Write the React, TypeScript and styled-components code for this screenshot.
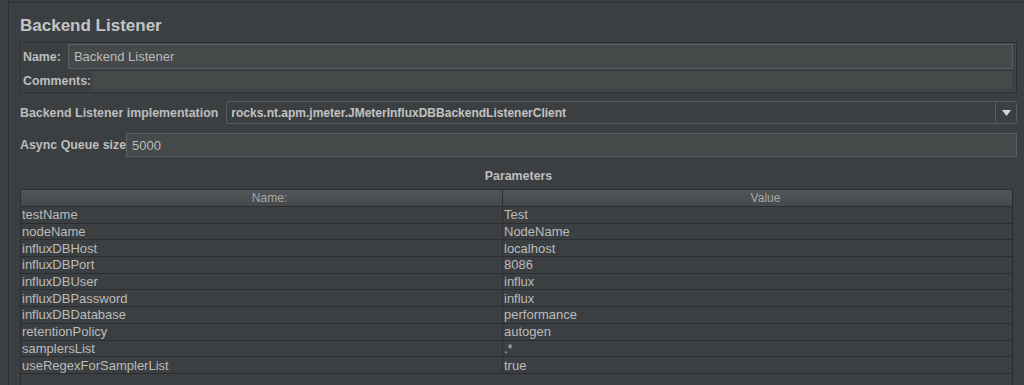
import React from 'react';
import styled, {createGlobalStyle} from 'styled-components';

type Param = {
    name: string
    value: string
}

const params: Param[] = [
    {name: 'testName', value: 'Test'},
    {name: 'nodeName', value: 'NodeName'},
    {name: 'influxDBHost', value: 'localhost'},
    {name: 'influxDBPort', value: '8086'},
    {name: 'influxDBUser', value: 'influx'},
    {name: 'influxDBPassword', value: 'influx'},
    {name: 'influxDBDatabase', value: 'performance'},
    {name: 'retentionPolicy', value: 'autogen'},
    {name: 'samplersList', value: '.*'},
    {name: 'useRegexForSamplerList', value: 'true'},
];

const GlobalStyle = createGlobalStyle`
    html, body {
        margin: 0;
        padding: 0;
        background: #3c3f41;
        overflow: hidden;
    }
    body {
        font-family: "Liberation Sans", Arial, sans-serif;
        color: #bbbbbb;
    }
`;

const Frame = styled.div`
    display: flex;
    height: 385px;
`;

const SideStrip = styled.div`
    width: 8px;
    background: #3e4143;
    border-right: 1px solid #2d2f31;
`;

const Main = styled.div`
    flex: 1;
    display: flex;
    flex-direction: column;
    margin-top: 2px;
    border-top: 1px solid #2d2f31;
    padding: 0 7px 0 11px;
    min-width: 0;
`;

const Title = styled.h2`
    margin: 13px 0 6px;
    font-size: 17px;
    line-height: 20px;
    font-weight: bold;
    color: #c4c4c4;
`;

const NameBox = styled.div`
    border: 1px solid #2c2e30;
    box-shadow: inset 0 0 0 1px #45484a;
    padding: 1px 3px 2px 2px;
    display: flex;
    flex-direction: column;
    gap: 2px;
`;

const FieldRow = styled.div<{ $gap: number }>`
    display: flex;
    align-items: center;
    gap: ${({$gap}) => $gap}px;
`;

const Label = styled.span`
    font-size: 12.4px;
    font-weight: bold;
    color: #bdbdbd;
    white-space: nowrap;
`;

const TextField = styled.div<{ $height: number, $muted?: boolean }>`
    flex: 1;
    height: ${({$height}) => $height}px;
    box-sizing: border-box;
    background: #45494a;
    border: 1px solid ${({$muted}) => $muted ? '#414446' : '#5c5f61'};
    padding-left: 5px;
    display: flex;
    align-items: center;
    font-size: 13px;
    color: #bbbbbb;
`;

const ImplRow = styled(FieldRow)`
    margin-top: 8px;
`;

const AsyncRow = styled(FieldRow)`
    margin-top: 9px;
`;

const Combo = styled.div`
    flex: 1;
    height: 23px;
    box-sizing: border-box;
    border: 1px solid #5a5d5f;
    border-radius: 3px;
    display: flex;
    align-items: stretch;
    background: #3c3f41;
`;

const ComboText = styled.div`
    flex: 1;
    padding-left: 4px;
    display: flex;
    align-items: center;
    font-size: 12px;
    font-weight: bold;
    color: #c2c2c2;
`;

const ComboArrow = styled.div`
    width: 20px;
    border-left: 1px solid #5a5d5f;
    display: flex;
    align-items: center;
    justify-content: center;
`;

const SectionTitle = styled.div`
    margin: 11px 0 5px;
    text-align: center;
    font-size: 12.4px;
    line-height: 16px;
    font-weight: bold;
    color: #bdbdbd;
`;

const Table = styled.div`
    flex: 1;
    margin-right: 4px;
    border: 1px solid #2b2d2f;
    border-bottom: none;
    display: flex;
    flex-direction: column;
`;

const Row = styled.div<{ $header?: boolean }>`
    display: grid;
    grid-template-columns: 482px 1fr;
    height: ${({$header}) => $header ? '17px' : '16.7px'};
    box-sizing: border-box;
    border-bottom: 1px solid #2b2d2f;
    background: ${({$header}) => $header ? 'linear-gradient(#525557, #46494b)' : '#3c3f41'};
`;

const Cell = styled.div<{ $header?: boolean }>`
    display: flex;
    align-items: center;
    justify-content: ${({$header}) => $header ? 'center' : 'flex-start'};
    padding-left: ${({$header}) => $header ? '16px' : '1px'};
    font-size: ${({$header}) => $header ? '12px' : '13px'};
    color: ${({$header}) => $header ? '#a8a8a8' : '#bbbbbb'};
    white-space: nowrap;
    overflow: hidden;

    &:first-child {
        border-right: 1px solid #2b2d2f;
    }
`;

export default function App() {
    return (
        <>
            <GlobalStyle/>
            <Frame>
                <SideStrip/>
                <Main>
                    <Title>Backend Listener</Title>
                    <NameBox>
                        <FieldRow $gap={7}>
                            <Label>Name:</Label>
                            <TextField $height={25}>Backend Listener</TextField>
                        </FieldRow>
                        <FieldRow $gap={0}>
                            <Label>Comments:</Label>
                            <TextField $height={19} $muted/>
                        </FieldRow>
                    </NameBox>
                    <ImplRow $gap={8}>
                        <Label>Backend Listener implementation</Label>
                        <Combo>
                            <ComboText>rocks.nt.apm.jmeter.JMeterInfluxDBBackendListenerClient</ComboText>
                            <ComboArrow>
                                <svg width="9" height="6" viewBox="0 0 9 6">
                                    <path d="M0 0 L9 0 L4.5 6 Z" fill="#d8d8d8"/>
                                </svg>
                            </ComboArrow>
                        </Combo>
                    </ImplRow>
                    <AsyncRow $gap={0}>
                        <Label>Async Queue size</Label>
                        <TextField $height={24}>5000</TextField>
                    </AsyncRow>
                    <SectionTitle>Parameters</SectionTitle>
                    <Table>
                        <Row $header>
                            <Cell $header>Name:</Cell>
                            <Cell $header>Value</Cell>
                        </Row>
                        {params.map((p) => (
                            <Row key={p.name}>
                                <Cell>{p.name}</Cell>
                                <Cell>{p.value}</Cell>
                            </Row>
                        ))}
                    </Table>
                </Main>
            </Frame>
        </>
    );
}
